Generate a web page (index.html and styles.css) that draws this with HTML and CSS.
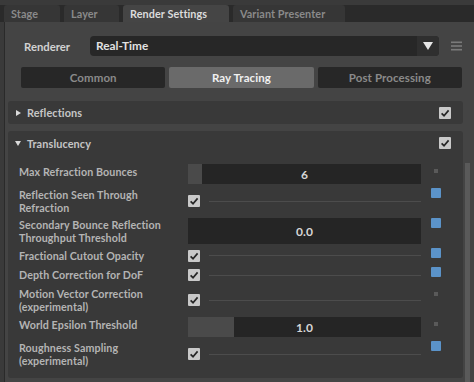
FILE: index.html
```html
<!DOCTYPE html>
<html>
<head>
<meta charset="utf-8">
<link rel="stylesheet" href="styles.css">
</head>
<body>
<div class="window">
  <div class="tabbar">
    <div class="tab t-stage">Stage</div>
    <div class="tab t-layer">Layer</div>
    <div class="tab t-render active">Render Settings</div>
    <div class="tab t-variant">Variant Presenter</div>
  </div>
  <div class="panel">
    <div class="renderer-row">
      <div class="renderer-label">Renderer</div>
      <div class="dropdown">
        <div class="dropdown-value">Real-Time</div>
        <div class="dropdown-arrow"><span class="tri-down-big"></span></div>
      </div>
      <svg class="menu-icon" width="11" height="10" viewBox="0 0 11 10">
        <rect x="0" y="0.5" width="11" height="1.6" fill="#7a7a7a"/>
        <rect x="0" y="4.2" width="11" height="1.6" fill="#7a7a7a"/>
        <rect x="0" y="7.9" width="11" height="1.6" fill="#7a7a7a"/>
      </svg>
    </div>
    <div class="segments">
      <div class="seg">Common</div>
      <div class="seg active">Ray Tracing</div>
      <div class="seg">Post Processing</div>
    </div>
    <div class="scroll">
      <div class="sections">
        <div class="section">
          <div class="sec-head">
            <span class="tri-right"></span>
            <span class="sec-title">Reflections</span>
            <span class="cb head-cb"><svg width="12" height="12" viewBox="0 0 12 12"><path d="M2.6 6.4 L5 8.7 L9.6 3.4" fill="none" stroke="#262626" stroke-width="1.7"/></svg></span>
          </div>
        </div>
        <div class="section open">
          <div class="sec-head">
            <span class="tri-down"></span>
            <span class="sec-title">Translucency</span>
            <span class="cb head-cb"><svg width="12" height="12" viewBox="0 0 12 12"><path d="M2.6 6.4 L5 8.7 L9.6 3.4" fill="none" stroke="#262626" stroke-width="1.7"/></svg></span>
          </div>
          <div class="sec-body">
            <div class="row h20 top">
              <div class="label">Max Refraction Bounces</div>
              <div class="widget"><div class="field"><div class="fill" style="width:14px"></div><span class="val">6</span></div></div>
              <div class="ind"><span class="dot"></span></div>
            </div>
            <div class="row h26">
              <div class="label two">Reflection Seen Through<br>Refraction</div>
              <div class="widget cbw"><span class="cb"><svg width="12" height="12" viewBox="0 0 12 12"><path d="M2.6 6.4 L5 8.7 L9.6 3.4" fill="none" stroke="#262626" stroke-width="1.7"/></svg></span><span class="rule"></span></div>
              <div class="ind"><span class="blue"></span></div>
            </div>
            <div class="row h26">
              <div class="label two">Secondary Bounce Reflection<br>Throughput Threshold</div>
              <div class="widget"><div class="field tall"><span class="val">0.0</span></div></div>
              <div class="ind"><span class="blue"></span></div>
            </div>
            <div class="row h15">
              <div class="label">Fractional Cutout Opacity</div>
              <div class="widget cbw"><span class="cb"><svg width="12" height="12" viewBox="0 0 12 12"><path d="M2.6 6.4 L5 8.7 L9.6 3.4" fill="none" stroke="#262626" stroke-width="1.7"/></svg></span><span class="rule"></span></div>
              <div class="ind"><span class="blue"></span></div>
            </div>
            <div class="row h16">
              <div class="label">Depth Correction for DoF</div>
              <div class="widget cbw"><span class="cb"><svg width="12" height="12" viewBox="0 0 12 12"><path d="M2.6 6.4 L5 8.7 L9.6 3.4" fill="none" stroke="#262626" stroke-width="1.7"/></svg></span><span class="rule"></span></div>
              <div class="ind"><span class="blue"></span></div>
            </div>
            <div class="row h26">
              <div class="label two">Motion Vector Correction<br>(experimental)</div>
              <div class="widget cbw"><span class="cb"><svg width="12" height="12" viewBox="0 0 12 12"><path d="M2.6 6.4 L5 8.7 L9.6 3.4" fill="none" stroke="#262626" stroke-width="1.7"/></svg></span><span class="rule"></span></div>
              <div class="ind"><span class="dot"></span></div>
            </div>
            <div class="row h20 top">
              <div class="label">World Epsilon Threshold</div>
              <div class="widget"><div class="field"><div class="fill" style="width:46px"></div><span class="val">1.0</span></div></div>
              <div class="ind"><span class="dot"></span></div>
            </div>
            <div class="row h26">
              <div class="label two">Roughness Sampling<br>(experimental)</div>
              <div class="widget cbw"><span class="cb"><svg width="12" height="12" viewBox="0 0 12 12"><path d="M2.6 6.4 L5 8.7 L9.6 3.4" fill="none" stroke="#262626" stroke-width="1.7"/></svg></span><span class="rule"></span></div>
              <div class="ind"><span class="blue"></span></div>
            </div>
          </div>
        </div>
      </div>
      <div class="scrollbar"><div class="thumb"></div></div>
    </div>
  </div>
</div>
</body>
</html>
```
FILE: styles.css
```css
* { box-sizing: border-box; }
html, body { margin: 0; padding: 0; }
body {
  background: #3a3a3a;
  font-family: "Lato", "Open Sans", sans-serif;
  font-weight: 700;
  font-size: 11px;
  width: 474px;
  height: 382px;
  overflow: hidden;
}
.window { width: 474px; height: 382px; display: flex; flex-direction: column; overflow: hidden; }

.tabbar {
  height: 22px;
  flex: none;
  display: flex;
  gap: 4px;
  padding: 5px 0 0 4px;
  background: linear-gradient(#3a3a3a 0 5px, #2a2a2a 5px);
}
.tab {
  height: 17px;
  background: #363636;
  color: #8a8a8a;
  border-radius: 3px 3px 0 0;
  padding-left: 7px;
  line-height: 17px;
  font-size: 10.8px;
  letter-spacing: 0.1px;
}
.t-stage { width: 56px; }
.t-layer { width: 55px; }
.t-render { width: 106px; }
.t-variant { width: 112px; }
.tab.active { background: #454545; color: #dcdcdc; }

.panel {
  flex: 1;
  min-height: 0;
  margin-left: 4px;
  border-left: 1px solid #2a2a2a;
  background: #444444;
  display: flex;
  flex-direction: column;
}

.renderer-row {
  margin-top: 14px;
  height: 20px;
  display: flex;
  align-items: center;
  padding-left: 19px;
}
.renderer-label { width: 66px; color: #d2d2d2; font-size: 11.3px; }
.dropdown {
  width: 349px;
  height: 20px;
  background: #272727;
  border-radius: 4px;
  display: flex;
  overflow: hidden;
}
.dropdown-value { flex: 1; color: #e2e2e2; font-size: 11.8px; line-height: 20px; padding-left: 6px; }
.dropdown-arrow {
  width: 22px;
  background: #2f2f2f;
  display: flex;
  align-items: center;
  justify-content: center;
}
.tri-down-big {
  width: 0; height: 0;
  border-left: 5.5px solid transparent;
  border-right: 5.5px solid transparent;
  border-top: 8px solid #e6e6e6;
}
.menu-icon { margin-left: 12px; }

.segments {
  margin-top: 11px;
  margin-left: 16px;
  width: 441px;
  height: 21px;
  display: flex;
  gap: 4px;
}
.seg {
  flex: 1;
  background: #272727;
  color: #8a8a8a;
  text-align: center;
  line-height: 21px;
  font-size: 11.5px;
  letter-spacing: 0.1px;
  border-radius: 2px;
}
.seg.active { background: #6a6a6a; color: #f0f0f0; }

.scroll { display: flex; margin-top: 13px; flex: 1; min-height: 0; overflow: hidden; }
.sections { margin-left: 3px; width: 455px; display: flex; flex-direction: column; gap: 7px; }
.section { background: #393939; border-radius: 3px; flex: none; }
.section.open { height: 247px; }
.sec-head {
  height: 23px;
  display: flex;
  align-items: center;
  padding-left: 7px;
  padding-right: 12px;
}
.section.open .sec-head { height: 24px; }
.tri-right {
  width: 0; height: 0;
  border-top: 3px solid transparent;
  border-bottom: 3px solid transparent;
  border-left: 5px solid #dadada;
  margin-left: 1px;
  margin-right: 6px;
}
.tri-down {
  width: 0; height: 0;
  border-left: 3px solid transparent;
  border-right: 3px solid transparent;
  border-top: 5px solid #dadada;
  margin-right: 6px;
}
.sec-title { color: #c6c6c6; font-size: 10.9px; letter-spacing: 0.1px; flex: 1; }

.cb {
  width: 12px; height: 12px;
  background: #c9c9c9;
  border-radius: 1px;
  display: block;
  flex: none;
}
.cb svg { display: block; }

.sec-body { padding: 9px 0 0 11px; display: flex; flex-direction: column; gap: 4px; }
.row { display: flex; align-items: center; }
.row.top { align-items: flex-start; }
.h15 { height: 15px; }
.h16 { height: 16px; }
.h20 { height: 20px; }
.h26 { height: 26px; }
.label { width: 169px; color: #b4b4b4; font-size: 10.7px; letter-spacing: 0.1px; line-height: 16px; white-space: nowrap; }
.label.two { line-height: 13px; }
.widget { width: 233px; display: flex; align-items: center; align-self: stretch; }
.cbw .rule { flex: 1; height: 1px; background: #4c4c4c; margin-left: 9px; }
.field {
  width: 233px;
  height: 20px;
  background: #252525;
  position: relative;
  display: flex;
  align-items: center;
  justify-content: center;
}
.field.tall { height: 26px; }
.fill { position: absolute; left: 0; top: 0; bottom: 0; background: #4a4a4a; }
.val { position: relative; color: #d6d6d6; font-size: 12px; }
.ind {
  width: 10px;
  margin-left: 10px;
  align-self: flex-start;
  display: flex;
  justify-content: center;
}
.blue { width: 10px; height: 10px; background: #5b93c9; border-radius: 1px; }
.dot { width: 4px; height: 4px; background: #5a5a5a; margin-top: 5px; }

.scrollbar { width: 11px; }
.thumb { margin-top: 62px; margin-left: 2px; width: 5px; height: 230px; background: #5a5a5a; }
```
